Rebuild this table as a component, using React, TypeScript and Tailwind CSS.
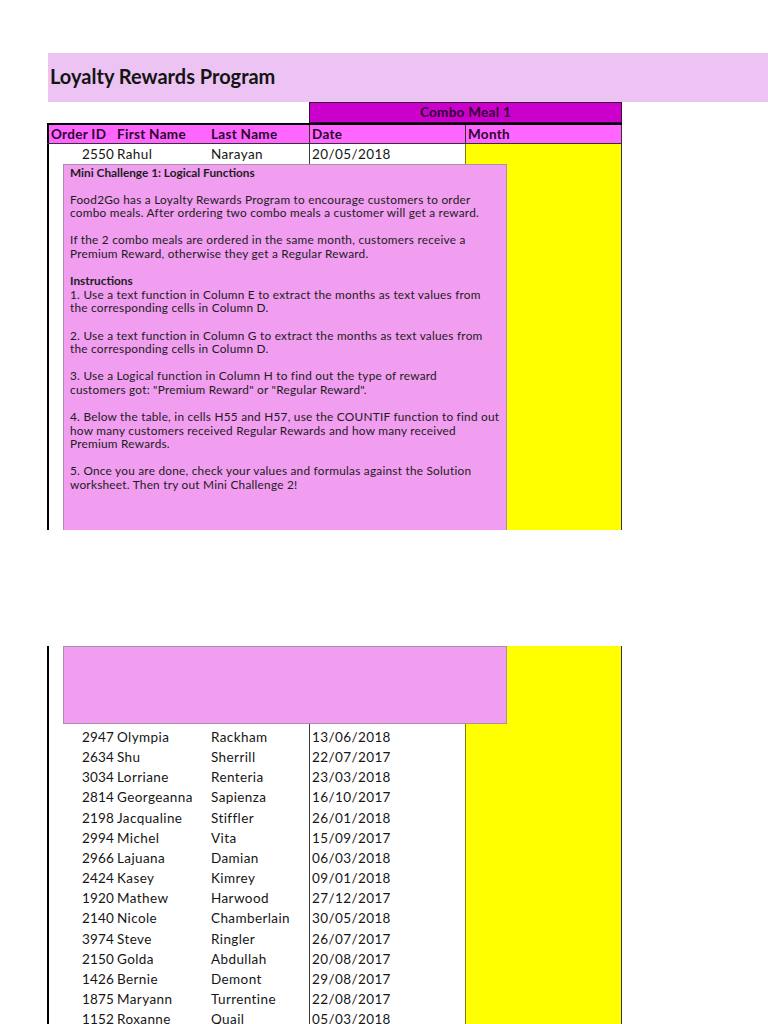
const font = "font-['Lato','Open_Sans',sans-serif]";

type Row = { id: string; first: string; last: string; date: string };

const lowerRows: Row[] = [
  { id: '2947', first: 'Olympia', last: 'Rackham', date: '13/06/2018' },
  { id: '2634', first: 'Shu', last: 'Sherrill', date: '22/07/2017' },
  { id: '3034', first: 'Lorriane', last: 'Renteria', date: '23/03/2018' },
  { id: '2814', first: 'Georgeanna', last: 'Sapienza', date: '16/10/2017' },
  { id: '2198', first: 'Jacqualine', last: 'Stiffler', date: '26/01/2018' },
  { id: '2994', first: 'Michel', last: 'Vita', date: '15/09/2017' },
  { id: '2966', first: 'Lajuana', last: 'Damian', date: '06/03/2018' },
  { id: '2424', first: 'Kasey', last: 'Kimrey', date: '09/01/2018' },
  { id: '1920', first: 'Mathew', last: 'Harwood', date: '27/12/2017' },
  { id: '2140', first: 'Nicole', last: 'Chamberlain', date: '30/05/2018' },
  { id: '3974', first: 'Steve', last: 'Ringler', date: '26/07/2017' },
  { id: '2150', first: 'Golda', last: 'Abdullah', date: '20/08/2017' },
  { id: '1426', first: 'Bernie', last: 'Demont', date: '29/08/2017' },
  { id: '1875', first: 'Maryann', last: 'Turrentine', date: '22/08/2017' },
  { id: '1152', first: 'Roxanne', last: 'Quail', date: '05/03/2018' },
];

function DataRow({ row }: { row?: Row }) {
  return (
    <div className="grid grid-cols-[66px_94px_100px_156px_157px] h-[20.2px] text-[13.5px] tracking-[0.4px] leading-[20px] text-[#151515]">
      <div className="text-right pr-[1px] tracking-[0.2px]">{row?.id}</div>
      <div className="pl-[2px] whitespace-nowrap">{row?.first}</div>
      <div className="pl-[2px] whitespace-nowrap">{row?.last}</div>
      <div className="pl-[2px] border-l border-[#3a3a3a]">{row?.date}</div>
      <div className="bg-[#ffff00] border-l border-r border-l-[#7d7d10] border-r-[#333]" />
    </div>
  );
}

function NoteText() {
  return (
    <div className="px-[6px] pt-[1px] text-[11.8px] tracking-[0.25px] leading-[13.6px] text-[#1c1c1c]">
      <p className="font-bold tracking-normal">Mini Challenge 1: Logical Functions</p>
      <p className="mt-[13px]">
        Food2Go has a Loyalty Rewards Program to encourage customers to order combo meals. After ordering two combo
        meals a customer will get a reward.
      </p>
      <p className="mt-[13.6px]">
        If the 2 combo meals are ordered in the same month, customers receive a Premium Reward, otherwise they get a
        Regular Reward.
      </p>
      <p className="mt-[13.6px] font-bold tracking-normal">Instructions</p>
      <p>1. Use a text function in Column E to extract the months as text values from the corresponding cells in Column D.</p>
      <p className="mt-[13.6px]">
        2. Use a text function in Column G to extract the months as text values from the corresponding cells in Column D.
      </p>
      <p className="mt-[13.6px]">
        3. Use a Logical function in Column H to find out the type of reward
        <br />
        customers got: "Premium Reward" or "Regular Reward".
      </p>
      <p className="mt-[13.6px]">
        4. Below the table, in cells H55 and H57, use the COUNTIF function to find out how many customers received
        Regular Rewards and how many received Premium Rewards.
      </p>
      <p className="mt-[13.6px]">
        5. Once you are done, check your values and formulas against the Solution worksheet. Then try out Mini Challenge 2!
      </p>
    </div>
  );
}

export default function App() {
  return (
    <div className={`w-[768px] h-[1024px] overflow-hidden bg-white ${font}`}>
      <div className="h-[53px]" />

      {/* Title band */}
      <div className="ml-[48px] h-[49px] bg-[#ecc3f3] flex items-center pl-[2px] pb-[3px]">
        <h1 className="text-[20px] font-bold text-[#141414]">Loyalty Rewards Program</h1>
      </div>

      {/* Upper part of the sheet */}
      <div className="relative ml-[47px] w-[575px] h-[428px] overflow-hidden">
        <div className="flex h-[21px]">
          <div className="w-[262px]" />
          <div className="w-[313px] bg-[#cc00cc] border border-[#3a0a3a] flex items-center justify-center">
            <span className="text-[13.5px] tracking-[0.3px] font-bold text-[#2a0630]">Combo Meal 1</span>
          </div>
        </div>

        <div className="grid grid-cols-[68px_94px_100px_156px_157px] h-[21px] bg-[#ff66ff] border-t-2 border-b border-black border-b-[#333] text-[13.5px] tracking-[0.3px] font-bold leading-[18px] text-[#2a0630]">
          <div className="pl-[2px] border-l-2 border-black whitespace-nowrap">Order ID</div>
          <div className="pl-[2px]">First Name</div>
          <div className="pl-[2px]">Last Name</div>
          <div className="pl-[2px] border-l border-[#333]">Date</div>
          <div className="pl-[2px] border-l border-r border-[#333]">Month</div>
        </div>

        <div className="border-l-2 border-black">
          <DataRow row={{ id: '2550', first: 'Rahul', last: 'Narayan', date: '20/05/2018' }} />
          {Array.from({ length: 19 }).map((_, i) => (
            <DataRow key={i} />
          ))}
        </div>

        <div className="absolute left-[16px] top-[62px] w-[444px] h-[380px] bg-[#f19ef0] border border-[#a98fa9]">
          <NoteText />
        </div>
      </div>

      <div className="h-[116px]" />

      {/* Lower part of the sheet, after the page break */}
      <div className="relative ml-[47px] w-[575px] h-[378px] overflow-hidden">
        <div className="border-l-2 border-black">
          {Array.from({ length: 4 }).map((_, i) => (
            <DataRow key={i} />
          ))}
          {lowerRows.map((r) => (
            <DataRow key={r.id} row={r} />
          ))}
        </div>
        <div className="absolute left-[16px] top-0 w-[444px] h-[78px] bg-[#f19ef0] border border-[#a98fa9]" />
      </div>
    </div>
  );
}
